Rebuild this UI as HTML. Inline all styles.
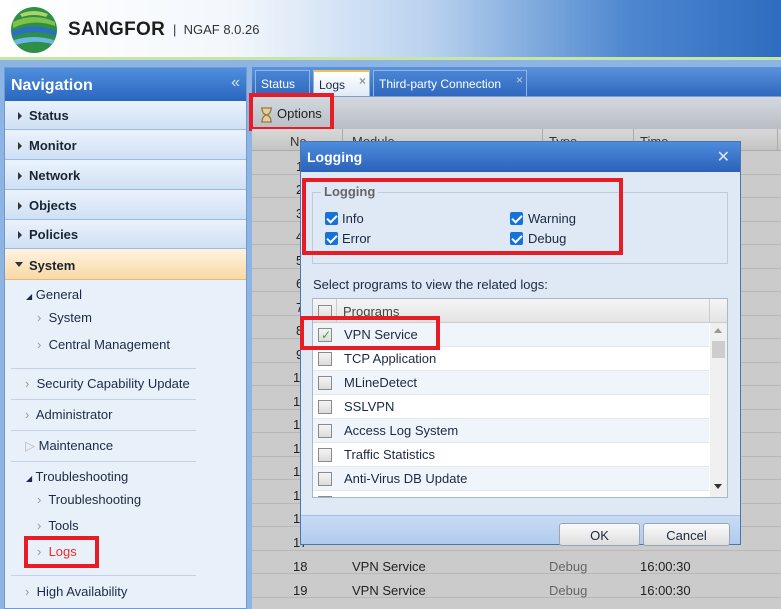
<!DOCTYPE html>
<html><head><meta charset="utf-8"><style>
*{box-sizing:border-box;margin:0;padding:0}
body{width:781px;height:609px;overflow:hidden;position:relative;font-family:"Liberation Sans","DejaVu Sans",sans-serif;font-size:13px;background:#8db4e2;color:#1a2a40}
.a{position:absolute}
.hdr{left:0;top:0;width:781px;height:60px;background:linear-gradient(90deg,#fff 0%,#f3f7fc 30%,#b9d2ee 55%,#4f88d0 80%,#2f6cc0 100%);border-bottom:3px solid #c6e6a8}
.nav{left:4px;top:67px;width:243px;height:542px;background:#e8f0fa;border:1px solid #6f9bd3}
.navh{left:0;top:0;width:241px;height:33px;background:linear-gradient(#4f8fdc,#2a66bf);color:#fff;font-weight:bold;font-size:16px;padding:9px 6px}
.it{left:0;width:241px;height:29px;background:linear-gradient(#eaf2fc,#cfe0f4);border-bottom:1px solid #9dbbe0;font-weight:bold;font-size:13px;padding:7px 0 0 24px;color:#1a2530}
.it:before{content:"";position:absolute;left:13px;top:11px;border-left:4px solid #333;border-top:4px solid transparent;border-bottom:4px solid transparent}
.sys{background:linear-gradient(#fff3e0,#f9d9a6);border-bottom:1px solid #e3b878}
.sys:before{left:10px;top:13px;border-top:5px solid #333;border-left:4px solid transparent;border-right:4px solid transparent;border-bottom:0}
.s{font-size:13px;color:#1c2b45}
.sep{height:1px;background:#c4d2e2;width:185px;left:6px}
.tabs{left:252px;top:67px;width:529px;height:29px;background:linear-gradient(#5a93dd,#2f68bd)}
.tab{top:3px;height:26px;border:1px solid #8fb3e4;border-bottom:0;color:#fff;padding:6px 5px 0;font-size:12px;background:linear-gradient(#4a85d4,#2f68bd)}
.tb{left:252px;top:96px;width:529px;height:33px;background:linear-gradient(#d4d8de,#b9bec6);border-top:1px solid #7d9dc8}
.grid{left:252px;top:129px;width:529px;height:480px;background:#cbcbcb}
.gh{left:0;top:0;width:529px;height:22px;background:linear-gradient(#d8d8d8,#c4c4c4);border-bottom:1px solid #aaa}
.row{left:0;width:529px;height:23.5px;border-bottom:1px solid #b8b8b8}
.n{color:#222}
.red{border:4px solid #e81c24}
.dlg{left:300px;top:141px;width:441px;height:404px;background:#dfe8f5;border:1px solid #4b74b5}
.dt{left:0;top:0;width:439px;height:30px;background:linear-gradient(#4e8cdc,#2a62ba);color:#fff;font-weight:bold;font-size:14px;padding:7px 6px}
.cb{width:13px;height:13px;border-radius:2px;background:#1672d9}
.cb:after{content:"";position:absolute;left:4px;top:1px;width:4px;height:8px;border:solid #fff;border-width:0 2px 2px 0;transform:rotate(45deg)}
.ub{width:14px;height:14px;border:1px solid #8b8b8b;background:linear-gradient(#f4f4f4,#dcdcdc)}
.lr{left:0;width:396px;height:24px;border-bottom:1px solid #e3e8ee;padding:4px 0 0 31px;font-size:13px}
.btn{top:523px;height:23px;border:1px solid #9aa5b3;border-radius:3px;background:linear-gradient(#fafafa,#dedede);text-align:center;font-size:13px;padding-top:4px}
</style></head><body>
<div class="a hdr">
 <svg class="a" style="left:10px;top:6px" width="48" height="48" viewBox="0 0 48 48">
  <circle cx="24" cy="24" r="23" fill="#2f8f45"/>
  <path d="M3 16 Q24 6 45 16 L45 20 Q24 12 3 22Z" fill="#7dc24a"/>
  <path d="M2 25 Q24 16 46 25 L46 30 Q24 22 2 31Z" fill="#2b6fc2"/>
  <path d="M4 34 Q24 28 44 34 L42 38 Q24 33 6 39Z" fill="#6bb6e8"/>
  <path d="M10 8 Q24 2 38 8 L36 11 Q24 7 12 11Z" fill="#aad36a"/>
 </svg>
 <div class="a" style="left:68px;top:19px;font-weight:bold;font-size:19px;color:#1d1d1d;letter-spacing:0.3px">SANGFOR</div>
 <div class="a" style="left:173px;top:22px;font-size:13px;color:#333">|&nbsp; NGAF 8.0.26</div>
</div>

<div class="a nav">
 <div class="a navh">Navigation<span class="a" style="right:6px;top:6px;font-weight:normal;color:#cfe0f8">«</span></div>
 <div class="a it" style="top:33px">Status</div>
 <div class="a it" style="top:63px">Monitor</div>
 <div class="a it" style="top:93px">Network</div>
 <div class="a it" style="top:123px">Objects</div>
 <div class="a it" style="top:152px">Policies</div>
 <div class="a it sys" style="top:181px;height:31px;padding-top:9px">System</div>
 <div class="a s" style="left:21px;top:219px"><span style="font-size:8px">◢</span> General</div>
 <div class="a s" style="left:32px;top:242px"><span style="color:#999">›</span>&nbsp; System</div>
 <div class="a s" style="left:32px;top:269px"><span style="color:#999">›</span>&nbsp; Central Management</div>
 <div class="a sep" style="top:300px"></div>
 <div class="a s" style="left:20px;top:308px"><span style="color:#999">›</span>&nbsp; Security Capability Update</div>
 <div class="a sep" style="top:331px"></div>
 <div class="a s" style="left:20px;top:339px"><span style="color:#999">›</span>&nbsp; Administrator</div>
 <div class="a sep" style="top:362px"></div>
 <div class="a s" style="left:20px;top:370px"><span style="color:#bbb">▷</span> Maintenance</div>
 <div class="a sep" style="top:393px"></div>
 <div class="a s" style="left:21px;top:401px"><span style="font-size:8px">◢</span> Troubleshooting</div>
 <div class="a s" style="left:32px;top:424px"><span style="color:#999">›</span>&nbsp; Troubleshooting</div>
 <div class="a s" style="left:32px;top:450px"><span style="color:#999">›</span>&nbsp; Tools</div>
 <div class="a s" style="left:32px;top:476px"><span style="color:#999">›</span>&nbsp; <span style="color:#f02a2a">Logs</span></div>
 <div class="a red" style="left:19px;top:468px;width:75px;height:32px"></div>
 <div class="a sep" style="top:507px"></div>
 <div class="a s" style="left:20px;top:516px"><span style="color:#999">›</span>&nbsp; High Availability</div>
</div>

<div class="a tabs">
 <div class="a tab" style="left:3px;width:55px">Status</div>
 <div class="a tab" style="left:61px;width:57px;background:linear-gradient(#fff,#dfeaf8);color:#1a2a40;border-top:2px solid #f3c24e">Logs<span class="a" style="right:3px;top:2px;color:#999;font-weight:bold">×</span></div>
 <div class="a tab" style="left:121px;width:154px">Third-party Connection<span class="a" style="right:3px;top:2px;color:#bcd">×</span></div>
</div>
<div class="a tb">
 <svg class="a" style="left:8px;top:10px" width="13" height="16" viewBox="0 0 13 16"><path d="M1 1H12M1 15H12M2 1Q2 7 6.5 8Q11 7 11 1M2 15Q2 9 6.5 8Q11 9 11 15" fill="#e7cf9a" stroke="#9a7a46" stroke-width="1.3"/></svg>
 <div class="a" style="left:25px;top:9px;color:#222">Options</div>
</div>
<div class="a red" style="left:249px;top:93px;width:85px;height:38px"></div>

<div class="a grid">
 <div class="a gh"></div>
 <div class="a" style="left:38px;top:5px;color:#333">No</div>
 <div class="a" style="left:100px;top:5px;color:#333">Module</div>
 <div class="a" style="left:297px;top:5px;color:#333">Type</div>
 <div class="a" style="left:388px;top:5px;color:#333">Time</div>
 <div class="a" style="left:90px;top:0;width:1px;height:22px;background:#aaa"></div>
 <div class="a" style="left:290px;top:0;width:1px;height:22px;background:#aaa"></div>
 <div class="a" style="left:381px;top:0;width:1px;height:22px;background:#aaa"></div>
 <div class="a" style="left:525px;top:0;width:1px;height:22px;background:#aaa"></div>
 <div class="a row" style="top:22px"></div><div class="a row" style="top:45.5px"></div><div class="a row" style="top:69px"></div><div class="a row" style="top:92.5px"></div><div class="a row" style="top:116px"></div><div class="a row" style="top:139.5px"></div><div class="a row" style="top:163px"></div><div class="a row" style="top:186.5px"></div><div class="a row" style="top:210px"></div><div class="a row" style="top:233.5px"></div><div class="a row" style="top:257px"></div><div class="a row" style="top:280.5px"></div><div class="a row" style="top:304px"></div><div class="a row" style="top:327.5px"></div><div class="a row" style="top:351px"></div><div class="a row" style="top:374.5px"></div><div class="a row" style="top:398px"></div><div class="a row" style="top:421.5px"></div><div class="a row" style="top:445px"></div>
 <div class="a n" style="left:44px;top:30px">1</div><div class="a n" style="left:44px;top:53px">2</div><div class="a n" style="left:44px;top:77px">3</div><div class="a n" style="left:44px;top:100px">4</div><div class="a n" style="left:44px;top:124px">5</div><div class="a n" style="left:44px;top:147px">6</div><div class="a n" style="left:44px;top:171px">7</div><div class="a n" style="left:44px;top:194px">8</div><div class="a n" style="left:44px;top:218px">9</div>
 <div class="a n" style="left:41px;top:241px">10</div><div class="a n" style="left:41px;top:265px">11</div><div class="a n" style="left:41px;top:288px">12</div><div class="a n" style="left:41px;top:312px">13</div><div class="a n" style="left:41px;top:335px">14</div><div class="a n" style="left:41px;top:359px">15</div><div class="a n" style="left:41px;top:382px">16</div><div class="a n" style="left:41px;top:406px">17</div>
 <div class="a n" style="left:41px;top:430px">18</div><div class="a" style="left:100px;top:430px;color:#222">VPN Service</div><div class="a" style="left:297px;top:430px;color:#666">Debug</div><div class="a" style="left:388px;top:430px;color:#222">16:00:30</div>
 <div class="a n" style="left:41px;top:454px">19</div><div class="a" style="left:100px;top:454px;color:#222">VPN Service</div><div class="a" style="left:297px;top:454px;color:#666">Debug</div><div class="a" style="left:388px;top:454px;color:#222">16:00:30</div>
</div>

<div class="a dlg">
 <div class="a dt">Logging<span class="a" style="right:10px;top:5px;color:#dde6f3;font-size:16px">✕</span></div>
 <div class="a" style="left:11px;top:50px;width:416px;height:72px;border:1px solid #bfcbdc"></div>
 <div class="a" style="left:20px;top:42px;background:#dfe8f5;padding:0 3px;font-weight:bold;color:#666">Logging</div>
 <div class="a cb" style="left:24px;top:70px"></div><div class="a" style="left:41px;top:69px">Info</div>
 <div class="a cb" style="left:24px;top:90px"></div><div class="a" style="left:41px;top:89px">Error</div>
 <div class="a cb" style="left:209px;top:70px"></div><div class="a" style="left:227px;top:69px">Warning</div>
 <div class="a cb" style="left:209px;top:90px"></div><div class="a" style="left:227px;top:89px">Debug</div>
 <div class="a" style="left:12px;top:135px">Select programs to view the related logs:</div>
 <div class="a" style="left:11px;top:156px;width:416px;height:200px;border:1px solid #a7b7cc;background:#fff;overflow:hidden">
  <div class="a" style="left:0;top:0;width:414px;height:24px;background:linear-gradient(#f5f5f5,#e4e4e4);border-bottom:1px solid #ccc"></div>
  <div class="a" style="left:23px;top:0;width:1px;height:24px;background:#ccc"></div>
  <div class="a" style="left:396px;top:0;width:1px;height:24px;background:#ccc"></div>
  <div class="a ub" style="left:5px;top:6px"></div><div class="a" style="left:30px;top:5px;color:#444">Programs</div>
  <div class="a lr" style="top:24px;background:#f0f5fb">VPN Service</div>
  <div class="a lr" style="top:48px">TCP Application</div>
  <div class="a lr" style="top:72px;background:#f0f5fb">MLineDetect</div>
  <div class="a lr" style="top:96px">SSLVPN</div>
  <div class="a lr" style="top:120px;background:#f0f5fb">Access Log System</div>
  <div class="a lr" style="top:144px">Traffic Statistics</div>
  <div class="a lr" style="top:168px;background:#f0f5fb">Anti-Virus DB Update</div>
  <div class="a lr" style="top:192px">Local Log</div>
  <div class="a ub" style="left:5px;top:29px"></div><div class="a" style="left:8px;top:29px;color:#3aa53a;font-size:12px;font-weight:bold">✓</div>
  <div class="a ub" style="left:5px;top:53px"></div><div class="a ub" style="left:5px;top:77px"></div><div class="a ub" style="left:5px;top:101px"></div><div class="a ub" style="left:5px;top:125px"></div><div class="a ub" style="left:5px;top:149px"></div><div class="a ub" style="left:5px;top:173px"></div><div class="a ub" style="left:5px;top:197px"></div>
  <div class="a" style="left:397px;top:24px;width:17px;height:176px;background:#f0f0f0"></div>
  <div class="a" style="left:401px;top:29px;border-bottom:5px solid #999;border-left:4px solid transparent;border-right:4px solid transparent"></div>
  <div class="a" style="left:399px;top:42px;width:13px;height:17px;background:#cdcdcd"></div>
  <div class="a" style="left:401px;top:185px;border-top:5px solid #333;border-left:4px solid transparent;border-right:4px solid transparent"></div>
 </div>
 <div class="a" style="left:0;top:373px;width:439px;height:29px;background:linear-gradient(#c8dbf3,#b1cbee);border-top:1px solid #a5bde0"></div>
</div>
<div class="a btn" style="left:559px;width:81px">OK</div>
<div class="a btn" style="left:643px;width:87px">Cancel</div>
<div class="a red" style="left:302px;top:178px;width:321px;height:77px"></div>
<div class="a red" style="left:300px;top:316px;width:140px;height:34px"></div>
</body></html>
